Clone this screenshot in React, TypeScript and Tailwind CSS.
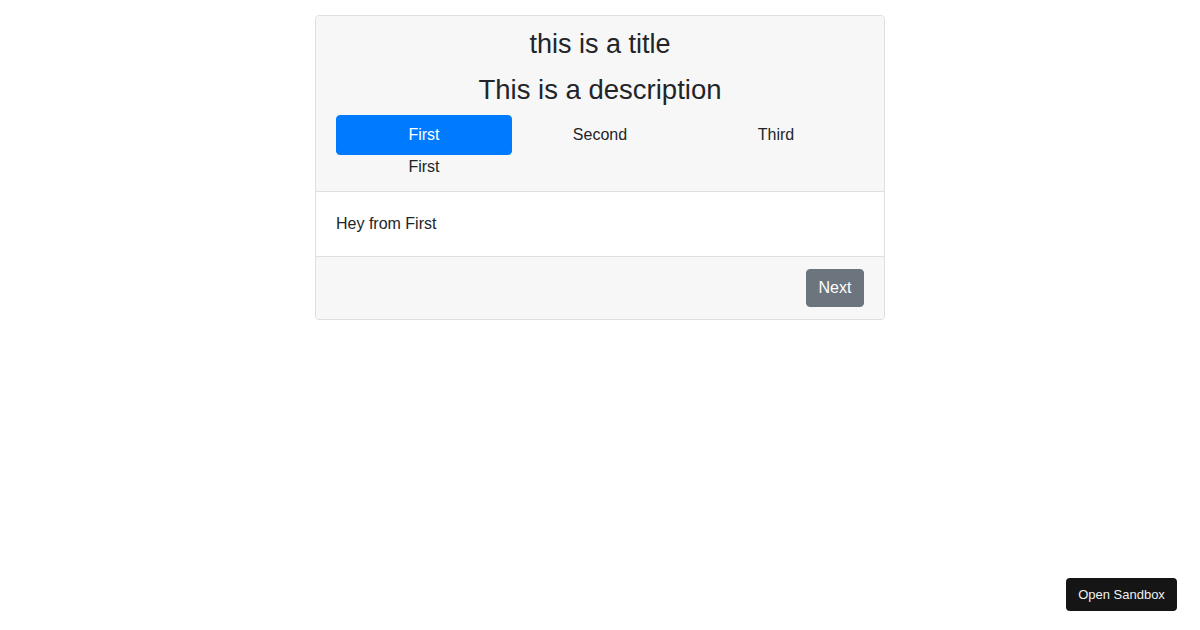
import { useState } from 'react';

const tabs = ['First', 'Second', 'Third'];

export default function App() {
  const [active, setActive] = useState(0);

  return (
    <div className="min-h-screen bg-white text-[#212529] font-['Liberation_Sans',Arial,sans-serif]">
      <div className="mx-auto pt-[15px] w-[570px]">
        <div className="rounded border border-[#dfdfdf] bg-white">
          {/* Card header */}
          <div className="bg-[#f7f7f7] border-b border-[#dfdfdf] rounded-t px-5 pt-3 pb-3 text-center">
            <h3 className="text-[27px] leading-[1.2] mb-[13px]">this is a title</h3>
            <h3 className="text-[27.5px] leading-[1.2] mb-[9px]">This is a description</h3>
            <div className="grid grid-cols-3">
              {tabs.map((t, i) => (
                <div key={t} className="flex flex-col items-stretch">
                  <button
                    onClick={() => setActive(i)}
                    className={`h-[40px] rounded text-base leading-6 px-3 border ${
                      active === i
                        ? 'bg-[#007bff] border-[#007bff] text-white'
                        : 'bg-transparent border-transparent text-[#212529]'
                    }`}
                  >
                    {t}
                  </button>
                  {active === i && <div className="text-base leading-6">{t}</div>}
                </div>
              ))}
            </div>
          </div>

          {/* Card body */}
          <div className="p-5 text-base leading-6">Hey from {tabs[active]}</div>

          {/* Card footer */}
          <div className="bg-[#f7f7f7] border-t border-[#dfdfdf] rounded-b px-5 py-3 flex justify-end">
            <button
              onClick={() => setActive((active + 1) % tabs.length)}
              className="h-[38px] w-[58px] rounded bg-[#6c757d] border border-[#6c757d] text-white text-base leading-6"
            >
              Next
            </button>
          </div>
        </div>
      </div>

      <button className="fixed right-[23px] bottom-[19px] h-[33px] w-[111px] rounded bg-[#151515] text-[#f0f0f0] text-[13px]">
        Open Sandbox
      </button>
    </div>
  );
}
